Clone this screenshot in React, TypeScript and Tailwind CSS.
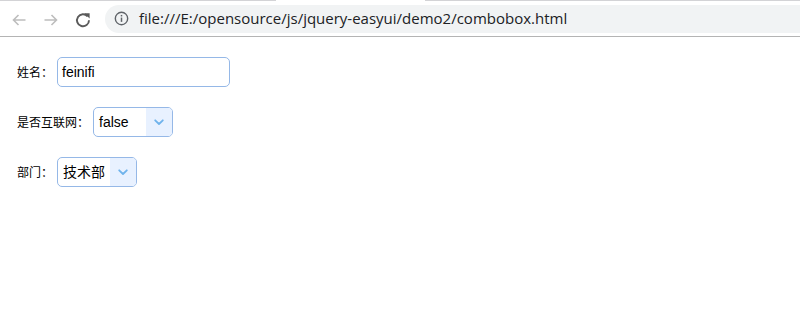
import React from "react";

function Chevron() {
  return (
    <svg width="10" height="7" viewBox="0 0 10 7" className="block">
      <path d="M1.2 1.3 L5 5 L8.8 1.3" fill="none" stroke="#6fb3ec" strokeWidth="1.8" strokeLinecap="round" strokeLinejoin="round" />
    </svg>
  );
}

function Combo({ value }: { value: string }) {
  return (
    <div className="flex h-[30px] w-[80px] overflow-hidden rounded-[5px] border border-[#95b8e7] bg-white">
      <div className="flex flex-1 items-center pl-[5px] text-[14px] text-black [font-family:'Liberation_Sans','Noto_Sans_CJK_SC',sans-serif]">
        {value}
      </div>
      <div className="flex w-[26px] items-center justify-center bg-[#e8f1ff]">
        <Chevron />
      </div>
    </div>
  );
}

export default function App() {
  return (
    <div className="h-[310px] w-[800px] overflow-hidden bg-white">
      {/* tab strip edge */}
      <div className="flex h-[1px]">
        <div className="w-[276px] bg-[#d3d3d6]" />
        <div className="w-[149px] bg-white" />
        <div className="flex-1 bg-[#d3d3d6]" />
      </div>
      {/* toolbar */}
      <div className="flex h-[36px] items-center border-b border-[#b4b4b4]">
        <div className="flex w-[105px] items-center pt-[2px]">
          <div className="ml-[11px] flex w-[16px] justify-center text-[#bdbdbd]">
            <svg width="16" height="16" viewBox="0 0 16 16">
              <path d="M14.5 8 H2.5 M7.5 3 L2.5 8 L7.5 13" fill="none" stroke="currentColor" strokeWidth="1.6" />
            </svg>
          </div>
          <div className="ml-[16px] flex w-[16px] justify-center text-[#bdbdbd]">
            <svg width="16" height="16" viewBox="0 0 16 16">
              <path d="M1.5 8 H13.5 M8.5 3 L13.5 8 L8.5 13" fill="none" stroke="currentColor" strokeWidth="1.6" />
            </svg>
          </div>
          <div className="ml-[16px] flex w-[16px] justify-center text-[#5a5a5a]">
            <svg width="16" height="16" viewBox="0 0 16 16">
              <path d="M12.6 4.4 A6 6 0 1 0 14 8.2" fill="none" stroke="currentColor" strokeWidth="1.9" />
              <path d="M9.2 1.2 H14.6 V6.6 Z" fill="currentColor" />
            </svg>
          </div>
        </div>
        <div className="flex h-[28px] flex-1 items-center rounded-l-full bg-[#f1f3f4]">
          <div className="ml-[9px] flex text-[#5f6368]">
            <svg width="15" height="15" viewBox="0 0 16 16">
              <circle cx="8" cy="8" r="6.6" fill="none" stroke="currentColor" strokeWidth="1.5" />
              <rect x="7.2" y="7" width="1.6" height="4.6" fill="currentColor" />
              <rect x="7.2" y="4.2" width="1.6" height="1.6" fill="currentColor" />
            </svg>
          </div>
          <div className="ml-[10px] text-[15px] text-[#202124] [font-family:'Open_Sans',sans-serif]">
            file:///E:/opensource/js/jquery-easyui/demo2/combobox.html
          </div>
        </div>
      </div>
      {/* form */}
      <div className="flex flex-col gap-[20px] pl-[17px] pt-[20px] text-[12px] text-black [font-family:'Noto_Sans_CJK_SC',sans-serif]">
        <div className="flex items-center gap-[4px]">
          <span>姓名：</span>
          <div className="flex h-[30px] w-[173px] items-center rounded-[5px] border border-[#95b8e7] bg-white pl-[4px] text-[14px] [font-family:'Liberation_Sans',sans-serif]">
            feinifi
          </div>
        </div>
        <div className="flex items-center gap-[4px]">
          <span>是否互联网：</span>
          <Combo value="false" />
        </div>
        <div className="flex items-center gap-[4px]">
          <span>部门：</span>
          <Combo value="技术部" />
        </div>
      </div>
    </div>
  );
}
